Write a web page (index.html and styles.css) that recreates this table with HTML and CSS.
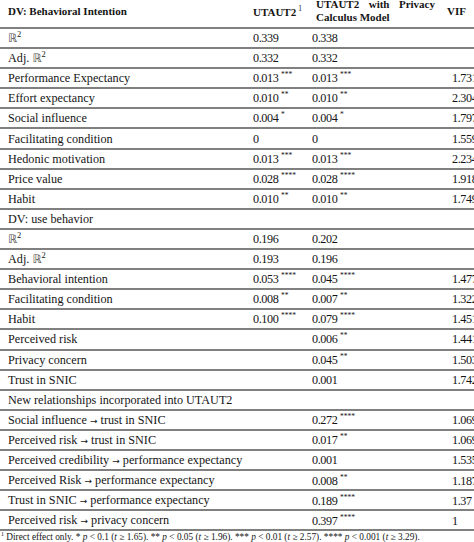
FILE: index.html
```html
<!DOCTYPE html>
<html>
<head>
<meta charset="utf-8">
<link rel="stylesheet" href="styles.css">
</head>
<body>
<div class="page">
  <div class="row head">
    <div class="c1">DV: Behavioral Intention</div>
    <div class="c2">UTAUT2<sup class="fn">1</sup></div>
    <div class="c3"><span class="just">UTAUT2 with Privacy</span><span class="l2">Calculus Model</span></div>
    <div class="c4"><span class="vifh">VIF</span></div>
  </div>
  <div class="row"><div class="c1"><span class="bb">ℝ</span><sup>2</sup></div><div class="c2">0.339</div><div class="c3">0.338</div><div class="c4"></div></div>
  <div class="row"><div class="c1">Adj. <span class="bb">ℝ</span><sup>2</sup></div><div class="c2">0.332</div><div class="c3">0.332</div><div class="c4"></div></div>
  <div class="row"><div class="c1">Performance Expectancy</div><div class="c2">0.013 <sup class="st">***</sup></div><div class="c3">0.013 <sup class="st">***</sup></div><div class="c4">1.731</div></div>
  <div class="row"><div class="c1">Effort expectancy</div><div class="c2">0.010 <sup class="st">**</sup></div><div class="c3">0.010 <sup class="st">**</sup></div><div class="c4">2.304</div></div>
  <div class="row"><div class="c1">Social influence</div><div class="c2">0.004 <sup class="st">*</sup></div><div class="c3">0.004 <sup class="st">*</sup></div><div class="c4">1.797</div></div>
  <div class="row"><div class="c1">Facilitating condition</div><div class="c2">0</div><div class="c3">0</div><div class="c4">1.559</div></div>
  <div class="row"><div class="c1">Hedonic motivation</div><div class="c2">0.013 <sup class="st">***</sup></div><div class="c3">0.013 <sup class="st">***</sup></div><div class="c4">2.234</div></div>
  <div class="row"><div class="c1">Price value</div><div class="c2">0.028 <sup class="st">****</sup></div><div class="c3">0.028 <sup class="st">****</sup></div><div class="c4">1.918</div></div>
  <div class="row"><div class="c1">Habit</div><div class="c2">0.010 <sup class="st">**</sup></div><div class="c3">0.010 <sup class="st">**</sup></div><div class="c4">1.749</div></div>
  <div class="row"><div class="c1">DV: use behavior</div><div class="c2"></div><div class="c3"></div><div class="c4"></div></div>
  <div class="row"><div class="c1"><span class="bb">ℝ</span><sup>2</sup></div><div class="c2">0.196</div><div class="c3">0.202</div><div class="c4"></div></div>
  <div class="row"><div class="c1">Adj. <span class="bb">ℝ</span><sup>2</sup></div><div class="c2">0.193</div><div class="c3">0.196</div><div class="c4"></div></div>
  <div class="row"><div class="c1">Behavioral intention</div><div class="c2">0.053 <sup class="st">****</sup></div><div class="c3">0.045 <sup class="st">****</sup></div><div class="c4">1.477</div></div>
  <div class="row"><div class="c1">Facilitating condition</div><div class="c2">0.008 <sup class="st">**</sup></div><div class="c3">0.007 <sup class="st">**</sup></div><div class="c4">1.322</div></div>
  <div class="row"><div class="c1">Habit</div><div class="c2">0.100 <sup class="st">****</sup></div><div class="c3">0.079 <sup class="st">****</sup></div><div class="c4">1.451</div></div>
  <div class="row"><div class="c1">Perceived risk</div><div class="c2"></div><div class="c3">0.006 <sup class="st">**</sup></div><div class="c4">1.441</div></div>
  <div class="row"><div class="c1">Privacy concern</div><div class="c2"></div><div class="c3">0.045 <sup class="st">**</sup></div><div class="c4">1.503</div></div>
  <div class="row"><div class="c1">Trust in SNIC</div><div class="c2"></div><div class="c3">0.001</div><div class="c4">1.742</div></div>
  <div class="row"><div class="c1">New relationships incorporated into UTAUT2</div><div class="c2"></div><div class="c3"></div><div class="c4"></div></div>
  <div class="row"><div class="c1">Social influence <span class="ar">→</span> trust in SNIC</div><div class="c2"></div><div class="c3">0.272 <sup class="st">****</sup></div><div class="c4">1.069</div></div>
  <div class="row"><div class="c1">Perceived risk <span class="ar">→</span> trust in SNIC</div><div class="c2"></div><div class="c3">0.017 <sup class="st">**</sup></div><div class="c4">1.069</div></div>
  <div class="row"><div class="c1">Perceived credibility <span class="ar">→</span> performance expectancy</div><div class="c2"></div><div class="c3">0.001</div><div class="c4">1.535</div></div>
  <div class="row"><div class="c1">Perceived Risk <span class="ar">→</span> performance expectancy</div><div class="c2"></div><div class="c3">0.008 <sup class="st">**</sup></div><div class="c4">1.187</div></div>
  <div class="row"><div class="c1">Trust in SNIC <span class="ar">→</span> performance expectancy</div><div class="c2"></div><div class="c3">0.189 <sup class="st">****</sup></div><div class="c4">1.37</div></div>
  <div class="row"><div class="c1">Perceived risk <span class="ar">→</span> privacy concern</div><div class="c2"></div><div class="c3">0.397 <sup class="st">****</sup></div><div class="c4">1</div></div>
  <p class="foot"><sup class="fnn">1</sup> Direct effect only. * <i>p</i> &lt; 0.1 (<i>t</i> <span class="ge">≥</span> 1.65). ** <i>p</i> &lt; 0.05 (<i>t</i> <span class="ge">≥</span> 1.96). *** <i>p</i> &lt; 0.01 (<i>t</i> <span class="ge">≥</span> 2.57). **** <i>p</i> &lt; 0.001 (<i>t</i> <span class="ge">≥</span> 3.29).</p>
</div>
</body>
</html>
```

FILE: styles.css
```css
html, body {
  margin: 0;
  padding: 0;
  background: #ffffff;
}
body {
  width: 474px;
  height: 542px;
  overflow: hidden;
  font-family: "Liberation Serif", "DejaVu Serif", serif;
  color: #151515;
}
.page {
  width: 474px;
}
.row {
  display: grid;
  grid-template-columns: 245px 59px 140px 30px;
  height: 18.1px;
  border-bottom: 2px solid #808080;
  font-size: 12.2px;
  line-height: 18px;
  align-items: center;
}
.row > div {
  padding-left: 8px;
  white-space: nowrap;
}
.row .c2,
.row .c3,
.row .c4 {
  letter-spacing: -0.4px;
}
.row .c4 {
  overflow: visible;
}
.head {
  height: 27px;
  font-weight: bold;
  font-size: 11px;
  line-height: 13px;
  align-items: start;
}
.head .c2,
.head .c3,
.head .c4 {
  letter-spacing: 0;
}
.head .c1 {
  padding-top: 5px;
}
.head .c2 {
  padding-top: 6px;
}
.head .c3 {
  width: 119px;
  padding-left: 12px;
  margin-top: -2px;
}
.head .c4 {
  padding-top: 5px;
}
.just {
  display: block;
  text-align: justify;
  text-align-last: justify;
  white-space: nowrap;
}
.l2 {
  display: block;
}
.vifh {
  display: inline-block;
  margin-left: -5px;
}
.fn {
  font-size: 7.5px;
  font-weight: normal;
  vertical-align: 5px;
  margin-left: 2px;
}
sup {
  line-height: 0;
}
.c1 sup {
  font-size: 8.5px;
  vertical-align: 5px;
}
.bb {
  font-family: "DejaVu Sans", sans-serif;
  color: #4a4a4a;
  font-size: 11.5px;
}
.ar {
  font-family: "DejaVu Sans", sans-serif;
  font-size: 9px;
}
.st {
  font-size: 7.5px;
  vertical-align: 5px;
  letter-spacing: 0;
}
.foot {
  margin: 0;
  padding-left: 1px;
  font-size: 9.3px;
  line-height: 13px;
  white-space: nowrap;
}
.fnn {
  font-size: 6px;
  vertical-align: 4px;
}
.ge {
  display: inline-block;
}
```
